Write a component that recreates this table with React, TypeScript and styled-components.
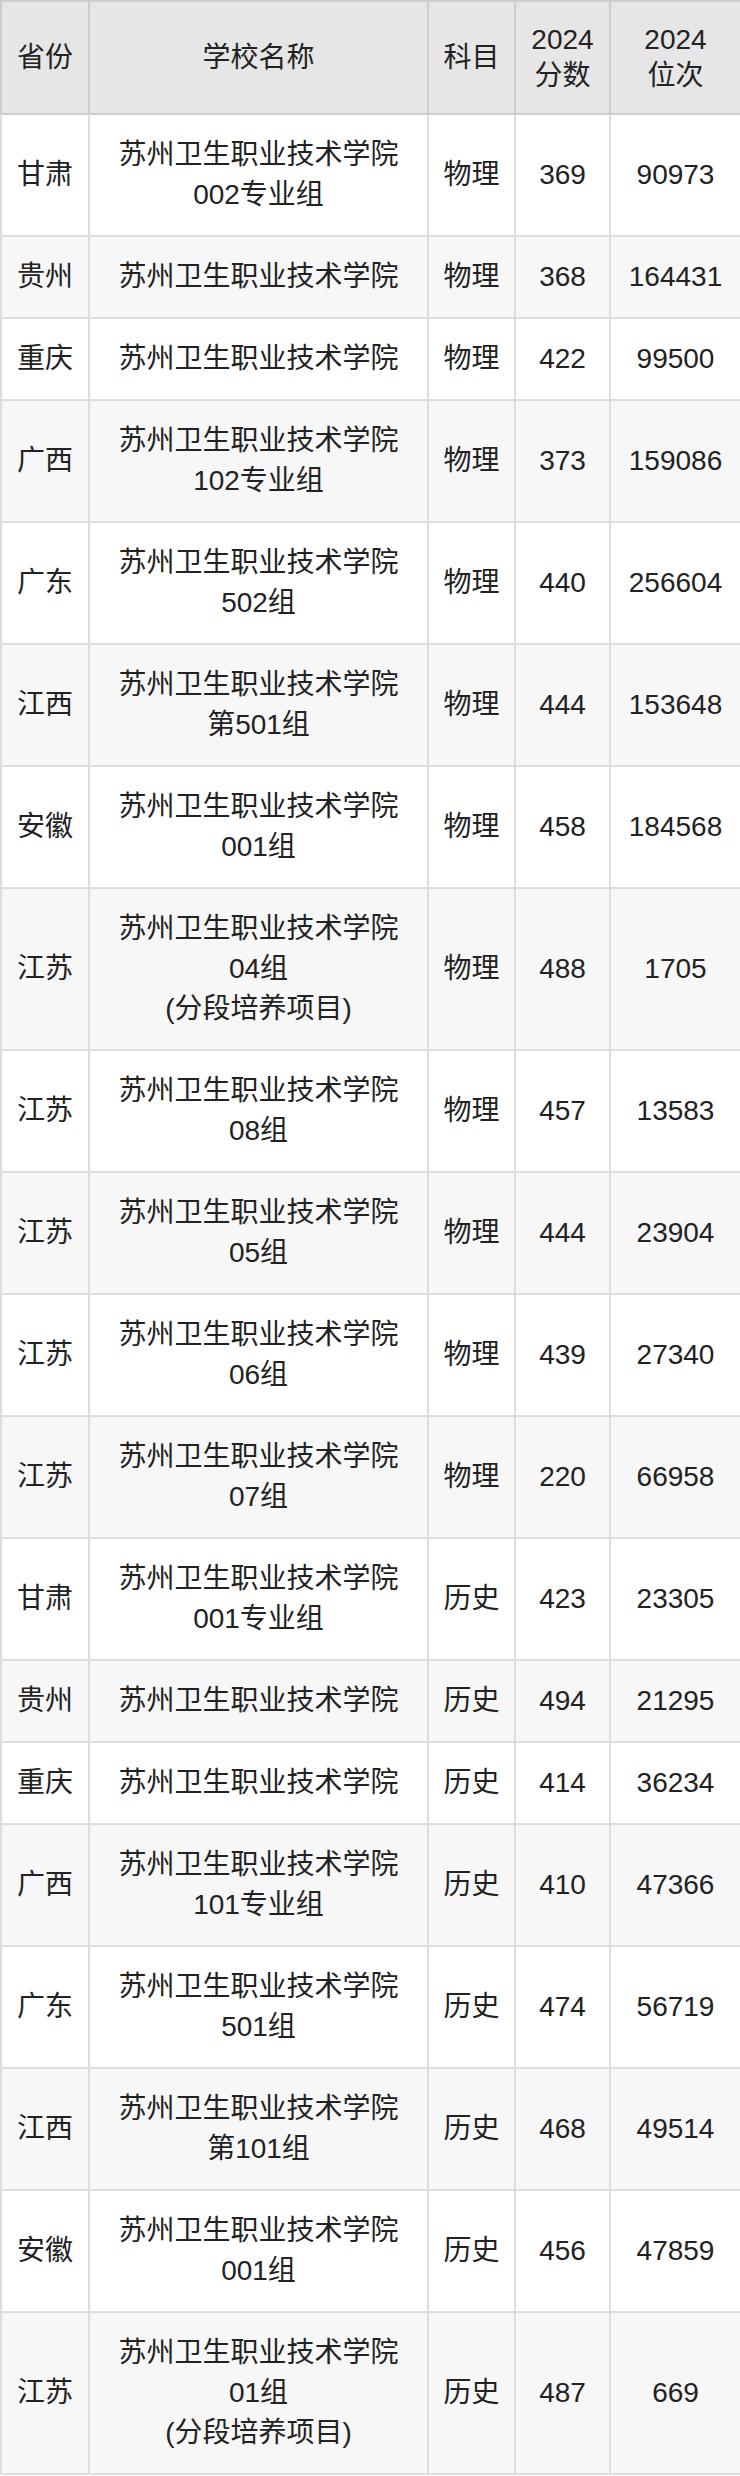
import React, { FC } from 'react';
import styled, { createGlobalStyle } from 'styled-components';

const GlobalStyle = createGlobalStyle`
    html, body {
        margin: 0;
        padding: 0;
        background: #ffffff;
    }
`

const Table = styled.table`
    width: 740px;
    border-collapse: collapse;
    table-layout: fixed;
    font-family: "Liberation Sans", "Noto Sans CJK SC", sans-serif;
    font-size: 28px;
    color: #222222;
`

const HeadCell = styled.th`
    background-color: #e6e6e6;
    border: 2px solid #cdcdcd;
    padding: 19.5px 4px;
    line-height: 36px;
    font-weight: normal;
    text-align: center;
    vertical-align: middle;
`

const Row = styled.tr<{ $striped: boolean }>`
    background-color: ${({ $striped }) => ($striped ? '#f7f7f7' : '#ffffff')};
`

const Cell = styled.td`
    border: 2px solid #dddddd;
    padding: 20px 4px;
    line-height: 40px;
    text-align: center;
    vertical-align: middle;
`

const SCHOOL = '苏州卫生职业技术学院';

interface Entry {
    province: string;
    group?: string;
    note?: string;
    subject: string;
    score: number;
    rank: number;
}

const entries: Entry[] = [
    { province: '甘肃', group: '002专业组', subject: '物理', score: 369, rank: 90973 },
    { province: '贵州', subject: '物理', score: 368, rank: 164431 },
    { province: '重庆', subject: '物理', score: 422, rank: 99500 },
    { province: '广西', group: '102专业组', subject: '物理', score: 373, rank: 159086 },
    { province: '广东', group: '502组', subject: '物理', score: 440, rank: 256604 },
    { province: '江西', group: '第501组', subject: '物理', score: 444, rank: 153648 },
    { province: '安徽', group: '001组', subject: '物理', score: 458, rank: 184568 },
    { province: '江苏', group: '04组', note: '(分段培养项目)', subject: '物理', score: 488, rank: 1705 },
    { province: '江苏', group: '08组', subject: '物理', score: 457, rank: 13583 },
    { province: '江苏', group: '05组', subject: '物理', score: 444, rank: 23904 },
    { province: '江苏', group: '06组', subject: '物理', score: 439, rank: 27340 },
    { province: '江苏', group: '07组', subject: '物理', score: 220, rank: 66958 },
    { province: '甘肃', group: '001专业组', subject: '历史', score: 423, rank: 23305 },
    { province: '贵州', subject: '历史', score: 494, rank: 21295 },
    { province: '重庆', subject: '历史', score: 414, rank: 36234 },
    { province: '广西', group: '101专业组', subject: '历史', score: 410, rank: 47366 },
    { province: '广东', group: '501组', subject: '历史', score: 474, rank: 56719 },
    { province: '江西', group: '第101组', subject: '历史', score: 468, rank: 49514 },
    { province: '安徽', group: '001组', subject: '历史', score: 456, rank: 47859 },
    { province: '江苏', group: '01组', note: '(分段培养项目)', subject: '历史', score: 487, rank: 669 },
];

const App: FC = () => {
    return (
        <>
            <GlobalStyle />
            <Table>
                <colgroup>
                    <col style={{ width: 88 }} />
                    <col style={{ width: 339 }} />
                    <col style={{ width: 87 }} />
                    <col style={{ width: 95 }} />
                    <col style={{ width: 131 }} />
                </colgroup>
                <thead>
                    <tr>
                        <HeadCell>省份</HeadCell>
                        <HeadCell>学校名称</HeadCell>
                        <HeadCell>科目</HeadCell>
                        <HeadCell>2024<br />分数</HeadCell>
                        <HeadCell>2024<br />位次</HeadCell>
                    </tr>
                </thead>
                <tbody>
                    {entries.map((e, i) => (
                        <Row key={i} $striped={i % 2 === 1}>
                            <Cell>{e.province}</Cell>
                            <Cell>
                                {SCHOOL}
                                {e.group && <><br />{e.group}</>}
                                {e.note && <><br />{e.note}</>}
                            </Cell>
                            <Cell>{e.subject}</Cell>
                            <Cell>{e.score}</Cell>
                            <Cell>{e.rank}</Cell>
                        </Row>
                    ))}
                </tbody>
            </Table>
        </>
    );
}

export default App;
